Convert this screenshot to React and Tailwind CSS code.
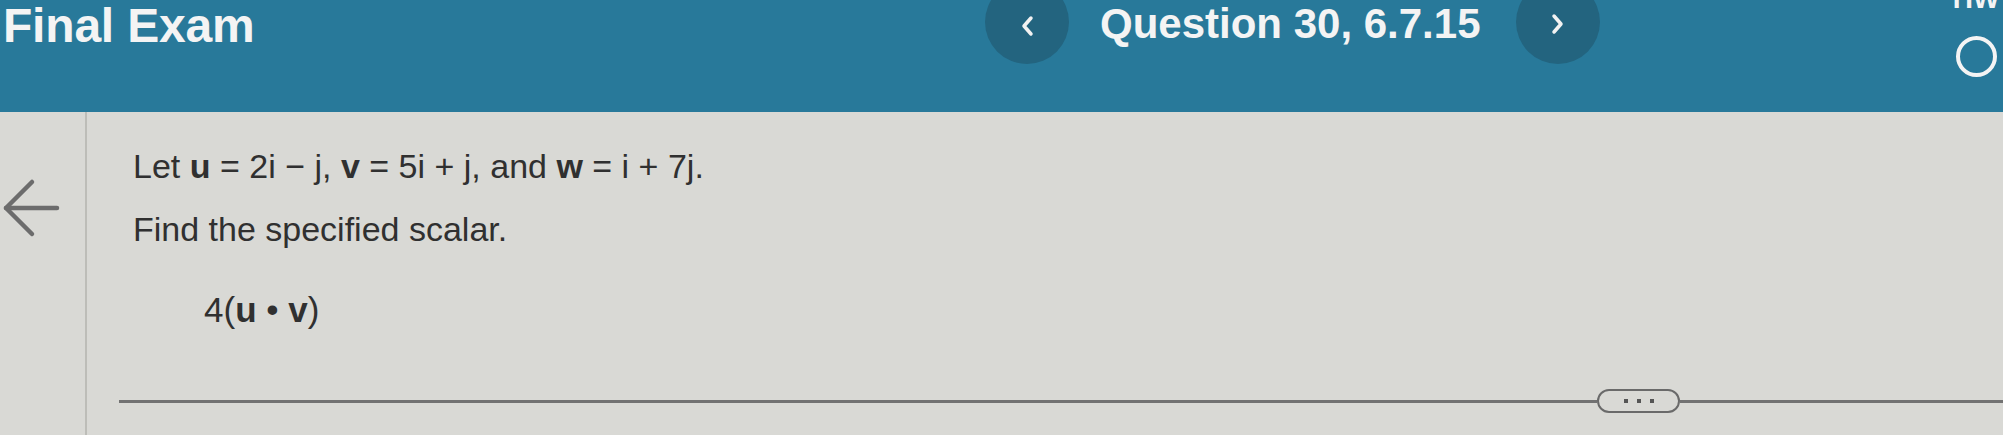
import React from "react";

const font = { fontFamily: '"Liberation Sans", Arial, Helvetica, sans-serif' };

function ArrowLeft() {
  return (
    <svg width="60" height="64" viewBox="0 0 60 64" fill="none">
      <path d="M5 32 H56" stroke="#6c6c6c" strokeWidth="4.5" strokeLinecap="round" />
      <path d="M31 6 L5 32 L31 58" stroke="#6c6c6c" strokeWidth="4.5" strokeLinecap="round" strokeLinejoin="round" />
    </svg>
  );
}

function Chevron({ dir }) {
  return (
    <svg width="14" height="22" viewBox="0 0 14 22" fill="none">
      {dir === "left" ? (
        <path d="M11 3 L4 11 L11 19" stroke="#f2f2f2" strokeWidth="3.5" strokeLinecap="round" strokeLinejoin="round" />
      ) : (
        <path d="M3 3 L10 11 L3 19" stroke="#f2f2f2" strokeWidth="3.5" strokeLinecap="round" strokeLinejoin="round" />
      )}
    </svg>
  );
}

export default function App() {
  return (
    <div className="w-[2003px] h-[435px] overflow-hidden bg-[#d9d9d5] text-[#333]" style={font}>
      {/* Header */}
      <header className="h-[112px] bg-[#28799a] flex items-start overflow-hidden">
        <div className="w-[985px] shrink-0 pl-[3px] pt-[2px]">
          <h1 className="text-[48px] leading-none font-bold text-[#f4f4f4] tracking-[-0.2px]">Final Exam</h1>
        </div>
        <div className="flex items-start">
          <button className="w-[84px] h-[84px] -mt-[20px] rounded-full bg-[#23647f] flex items-center justify-center pt-[8px]">
            <Chevron dir="left" />
          </button>
          <div className="ml-[31px] pt-[3px] text-[42px] leading-none font-bold text-[#f4f4f4]">Question 30, 6.7.15</div>
          <button className="ml-[35px] w-[84px] h-[84px] -mt-[20px] rounded-full bg-[#23647f] flex items-center justify-center pt-[4px]">
            <Chevron dir="right" />
          </button>
        </div>
        <div className="flex-1" />
        <div className="w-[48px] mr-[3px] flex flex-col items-center">
          <div className="-mt-[15px] text-[28px] font-bold leading-none text-[#f4f4f4]">HW</div>
          <div className="mt-[23px] w-[41px] h-[41px] rounded-full border-[4px] border-[#f4f4f4]" />
        </div>
      </header>

      {/* Content */}
      <div className="flex h-[323px]">
        <aside className="w-[87px] shrink-0 border-r-2 border-[#bdbdb8] pt-[64px] pl-[1px]">
          <ArrowLeft />
        </aside>
        <main className="flex-1 flex flex-col">
          <div className="pl-[46px] pt-[37px] text-[34px] leading-none text-[#303030]">
            <p>
              Let <b>u</b> = 2i − j, <b>v</b> = 5i + j, and <b>w</b> = i + 7j.
            </p>
            <p className="mt-[29px]">Find the specified scalar.</p>
            <p className="mt-[46px] pl-[71px] text-[35px]">
              4(<b>u</b> • <b>v</b>)
            </p>
          </div>
          <div className="mt-[62px] ml-[32px] flex items-center">
            <div className="flex-1 h-[3px] bg-[#727272]" />
            <button className="w-[83px] h-[24px] rounded-full border-2 border-[#6a6a6a] bg-[#d9d9d5] flex items-center justify-center gap-[9px]">
              <span className="w-[4px] h-[4px] bg-[#555]" />
              <span className="w-[4px] h-[4px] bg-[#555]" />
              <span className="w-[4px] h-[4px] bg-[#555]" />
            </button>
            <div className="w-[323px] h-[3px] bg-[#727272]" />
          </div>
        </main>
      </div>
    </div>
  );
}
